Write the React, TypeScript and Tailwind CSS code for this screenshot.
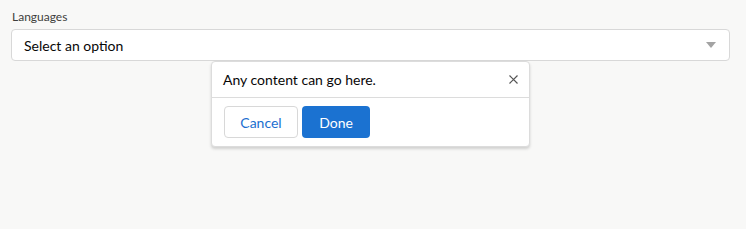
import React from "react";

export default function App() {
  return (
    <div
      className="min-h-[229px] bg-[#f8f8f7] pt-[8px] pl-[11px] pr-[16px] text-[#080707]"
      style={{ fontFamily: "Lato, 'Noto Sans', sans-serif" }}
    >
      <div className="pl-px text-[12px] leading-[18px] text-[#3e3e3c] mb-[3px]">Languages</div>
      <div className="flex h-[32px] items-center justify-between rounded-[4px] border border-[#d8d8d8] bg-white pl-[12px] pr-[13px] text-[14px]">
        <span>Select an option</span>
        <svg width="10" height="6" viewBox="0 0 10 6" className="block">
          <path d="M0 0 L10 0 L5 6 Z" fill="#a3a3a3" />
        </svg>
      </div>
      <div className="ml-[200px] w-[319px] rounded-[4px] border border-[#dcdcdc] bg-white shadow-[0_2px_3px_0_rgba(0,0,0,0.16)]">
        <div className="flex h-[35px] items-center justify-between pl-[11px] pr-[11px] text-[14px]">
          <span>Any content can go here.</span>
          <svg width="9" height="9" viewBox="0 0 9 9" className="block">
            <path d="M0.5 0.5 L8.5 8.5 M8.5 0.5 L0.5 8.5" stroke="#555" strokeWidth="1.2" />
          </svg>
        </div>
        <div className="flex gap-[4px] border-t border-[#dcdcdc] px-[12px] py-[8px]">
          <button className="h-[32px] w-[74px] rounded-[4px] border border-[#d8d8d8] bg-white text-[14px] text-[#1b6fd0]">
            Cancel
          </button>
          <button className="h-[32px] w-[68px] rounded-[4px] bg-[#1b72d1] text-[14px] text-white">
            Done
          </button>
        </div>
      </div>
    </div>
  );
}
